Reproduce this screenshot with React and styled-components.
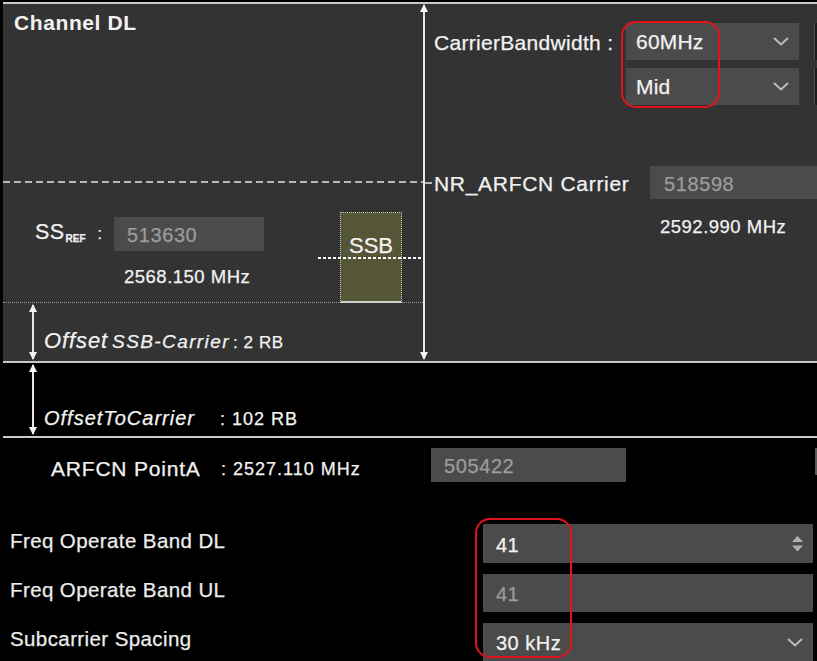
import React from "react";
import styled, { createGlobalStyle } from "styled-components";

const GlobalStyle = createGlobalStyle`
  html, body {
    margin: 0;
    padding: 0;
    background: #000;
  }
  body {
    font-family: "Liberation Sans", Arial, sans-serif;
    color: #f2f2f2;
    -webkit-text-stroke: 0.25px currentColor;
  }
`;

const Page = styled.div`
  position: relative;
  width: 817px;
  height: 661px;
  padding-top: 2px;
  box-sizing: border-box;
  background: #000;
  overflow: hidden;
`;

const TopPanel = styled.div`
  display: flex;
  height: 361px;
  margin-left: 3px;
  box-sizing: border-box;
  background: #333333;
  border-top: 2px solid #c8c8c8;
  border-bottom: 2px solid #c8c8c8;
`;

const LeftCol = styled.div`
  display: flex;
  flex-direction: column;
  width: 420px;
`;

const Head = styled.div`
  height: 177px;
  box-sizing: border-box;
  padding: 7px 0 0 11px;
`;

const Title = styled.div`
  font-size: 21px;
  font-weight: 700;
  letter-spacing: 0.6px;
  line-height: 24px;
  -webkit-text-stroke: 0;
`;

const DashLine = styled.div`
  height: 2px;
  width: ${({ $w }) => ($w ? `${$w}px` : "auto")};
  flex-shrink: 0;
  background: repeating-linear-gradient(90deg, #b8b8b8 0 7px, transparent 7px 11px);
`;

const SsArea = styled.div`
  display: flex;
  height: 120px;
  box-sizing: border-box;
  border-bottom: 1px dotted #9a9a9a;
`;

const SsRef = styled.div`
  padding: 34px 0 0 32px;
`;

const SsRow = styled.div`
  display: flex;
  align-items: flex-end;
`;

const SsLabel = styled.div`
  width: 79px;
  font-size: 21.5px;
  line-height: 24px;
  letter-spacing: 0.4px;

  sub {
    font-size: 10px;
    font-weight: 700;
    vertical-align: -3px;
    letter-spacing: 0;
    margin-left: 1px;
  }

  span {
    font-size: 16px;
    margin-left: 12px;
  }
`;

const Field = styled.div`
  display: flex;
  align-items: center;
  width: ${({ $w }) => $w}px;
  height: ${({ $h }) => $h || 34}px;
  flex-shrink: 0;
  box-sizing: border-box;
  padding: 0 ${({ $pr }) => $pr || 10}px 0 ${({ $pl }) => $pl || 13}px;
  background: #4b4b4b;
  color: ${({ $muted }) => ($muted ? "#9c9c9c" : "#f2f2f2")};
  font-size: ${({ $fs }) => $fs || 20}px;
  letter-spacing: ${({ $ls }) => $ls ?? 0.6}px;
  line-height: 1;
`;

const FieldText = styled.span`
  flex: 1;
  padding-top: ${({ $pt }) => $pt ?? 2}px;
`;

const Freq = styled.div`
  margin: ${({ $mt }) => $mt}px 0 0 ${({ $ml }) => $ml}px;
  font-size: 18.5px;
  line-height: 21px;
  letter-spacing: 0.5px;
`;

const SsbGroup = styled.div`
  position: relative;
  align-self: flex-end;
  margin-left: auto;
  width: 105px;
  padding-left: 22px;
  box-sizing: border-box;

  &::after {
    content: "";
    position: absolute;
    left: 0;
    right: 0;
    top: 45px;
    height: 2px;
    background: repeating-linear-gradient(90deg, #fff 0 3px, transparent 3px 5px);
  }
`;

const SsbBox = styled.div`
  width: 62px;
  height: 91px;
  margin-bottom: -1px;
  box-sizing: border-box;
  padding-top: 20px;
  text-align: center;
  background: #555537;
  border: 1px dotted #c4c4c4;
  border-bottom: 2px solid #cfcfcf;
  font-size: 22px;
  line-height: 25px;
`;

const ArrowBand = styled.div`
  display: flex;
  height: ${({ $h }) => $h}px;
  box-sizing: border-box;
  margin-left: ${({ $ml }) => $ml || 0}px;
  border-bottom: ${({ $line }) => ($line ? "2px solid #c8c8c8" : "none")};
`;

const VArrow = styled.div`
  position: relative;
  width: 2px;
  flex-shrink: 0;
  margin: ${({ $m }) => $m || "2px 0 2px 29px"};
  background: #e6e6e6;

  &::before,
  &::after {
    content: "";
    position: absolute;
    left: -3px;
    border-left: 4px solid transparent;
    border-right: 4px solid transparent;
  }
  &::before {
    top: -1px;
    border-bottom: 8px solid #f4f4f4;
  }
  &::after {
    bottom: -1px;
    border-top: 8px solid #f4f4f4;
  }
`;

const OffsetText = styled.div`
  align-self: flex-end;
  display: flex;
  align-items: baseline;
  margin-left: 10px;
  padding-bottom: ${({ $pb }) => $pb}px;
  line-height: 23px;
  white-space: nowrap;
`;

const Ital = styled.span`
  font-style: italic;
  font-size: ${({ $fs }) => $fs}px;
  letter-spacing: ${({ $ls }) => $ls}px;
  margin-right: ${({ $mr }) => $mr || 0}px;
`;

const Plain = styled.span`
  font-size: ${({ $fs }) => $fs}px;
  letter-spacing: ${({ $ls }) => $ls}px;
  margin-left: ${({ $ml }) => $ml || 0}px;
`;

const RightCol = styled.div`
  flex: 1;
  min-width: 0;
  overflow: hidden;
  padding-left: 9px;
`;

const CarrierRow = styled.div`
  display: flex;
  margin-top: 19px;
`;

const RowLabel = styled.div`
  display: flex;
  align-items: center;
  width: ${({ $w }) => $w}px;
  height: ${({ $h }) => $h}px;
  padding-top: ${({ $pt }) => $pt || 0}px;
  margin-left: ${({ $ml }) => $ml || 0}px;
  box-sizing: border-box;
  flex-shrink: 0;
  font-size: 21px;
  letter-spacing: ${({ $ls }) => $ls ?? 0.3}px;
  white-space: nowrap;
`;

const SelectGrid = styled.div`
  display: grid;
  grid-template-columns: 173px 4px;
  column-gap: 15px;
  row-gap: 8px;
`;

const Sliver = styled.div`
  height: ${({ $h }) => $h || 37}px;
  background: #1c1c1c;
  border-left: 1px solid #4a4a4a;
`;

const NrRow = styled.div`
  display: flex;
  align-items: center;
  margin-top: 61px;
  margin-left: -9px;
`;

const Chevron = () => (
  <svg width="16" height="9" viewBox="0 0 16 9">
    <polyline points="1,1 8,7.5 15,1" fill="none" stroke="#bdbdbd" strokeWidth="2" />
  </svg>
);

const Spinner = () => (
  <svg width="11" height="16" viewBox="0 0 11 16">
    <polygon points="5.5,0 11,6 0,6" fill="#b0b0b0" />
    <polygon points="0,9.5 11,9.5 5.5,15.5" fill="#b0b0b0" />
  </svg>
);

const PointRow = styled.div`
  display: flex;
  align-items: flex-end;
  padding-top: 10px;
`;

const PointLabel = styled.div`
  width: ${({ $w }) => $w}px;
  margin-left: ${({ $ml }) => $ml || 0}px;
  flex-shrink: 0;
  font-size: ${({ $fs }) => $fs}px;
  letter-spacing: ${({ $ls }) => $ls}px;
  line-height: 24px;
  padding-bottom: 1px;
  white-space: nowrap;
`;

const EdgeMark = styled.div`
  align-self: flex-start;
  width: 2px;
  height: 27px;
  margin-left: auto;
  background: #5a5a5a;
`;

const Form = styled.div`
  display: grid;
  grid-template-columns: 473px 330px;
  grid-template-rows: 39px 38px 38px;
  row-gap: 11px;
  margin-top: 42px;
  padding-left: 10px;
`;

const FormLabel = styled.div`
  align-self: center;
  margin-top: -6px;
  font-size: 20.5px;
  letter-spacing: 0.4px;
  line-height: 22px;
  color: #ececec;
  white-space: nowrap;
`;

const Highlight = styled.div`
  position: absolute;
  left: ${({ $x }) => $x}px;
  top: ${({ $y }) => $y}px;
  width: ${({ $w }) => $w}px;
  height: ${({ $h }) => $h}px;
  box-sizing: border-box;
  border: 2px solid #e3131b;
  border-radius: 15px;
  pointer-events: none;
`;

const App = () => {
  const formRows = [
    { label: "Freq Operate Band DL", value: "41", h: 39, extra: <Spinner /> },
    { label: "Freq Operate Band UL", value: "41", h: 38, muted: true },
    { label: "Subcarrier Spacing", value: "30 kHz", h: 38, extra: <Chevron /> },
  ];

  return (
    <Page>
      <GlobalStyle />
      <TopPanel>
        <LeftCol>
          <Head>
            <Title>Channel DL</Title>
          </Head>
          <DashLine />
          <SsArea>
            <SsRef>
              <SsRow>
                <SsLabel>
                  SS<sub>REF</sub>
                  <span>:</span>
                </SsLabel>
                <Field $w={150} $muted>
                  <FieldText>513630</FieldText>
                </Field>
              </SsRow>
              <Freq $mt={15} $ml={89}>2568.150 MHz</Freq>
            </SsRef>
            <SsbGroup>
              <SsbBox>SSB</SsbBox>
            </SsbGroup>
          </SsArea>
          <ArrowBand $h={58}>
            <VArrow />
            <OffsetText $pb={7}>
              <Ital $fs={22} $ls={0.9} $mr={4}>Offset</Ital>
              <Ital $fs={19} $ls={1.4}>SSB-Carrier</Ital>
              <Plain $fs={17} $ls={0.6} $ml={3}>: 2 RB</Plain>
            </OffsetText>
          </ArrowBand>
        </LeftCol>
        <VArrow $m="1px 0 2px 0" />
        <RightCol>
          <CarrierRow>
            <RowLabel $w={192} $h={37} $pt={2}>CarrierBandwidth :</RowLabel>
            <SelectGrid>
              <Field $w={173} $h={37} $pl={10} $fs={21} $ls={0.2}>
                <FieldText $pt={0}>60MHz</FieldText>
                <Chevron />
              </Field>
              <Sliver />
              <Field $w={173} $h={37} $pl={10} $fs={21} $ls={0.2}>
                <FieldText $pt={0}>Mid</FieldText>
                <Chevron />
              </Field>
              <Sliver />
            </SelectGrid>
          </CarrierRow>
          <NrRow>
            <DashLine $w={7} />
            <RowLabel $w={216} $h={33} $pt={3} $ls={0.7} $ml={2}>
              NR_ARFCN Carrier
            </RowLabel>
            <Field $w={200} $h={33} $pl={14} $muted>
              <FieldText>518598</FieldText>
            </Field>
          </NrRow>
          <Freq $mt={17} $ml={226}>2592.990 MHz</Freq>
        </RightCol>
      </TopPanel>

      <ArrowBand $h={75} $ml={3} $line>
        <VArrow />
        <OffsetText $pb={5}>
          <Ital $fs={20} $ls={1}>OffsetToCarrier</Ital>
          <Plain $fs={18} $ls={1} $ml={25}>: 102 RB</Plain>
        </OffsetText>
      </ArrowBand>

      <PointRow>
        <PointLabel $w={170} $ml={51} $fs={21} $ls={0.8}>ARFCN PointA</PointLabel>
        <PointLabel $w={210} $fs={18} $ls={1}>: 2527.110 MHz</PointLabel>
        <Field $w={195} $muted $fs={20} $ls={0.6}>
          <FieldText>505422</FieldText>
        </Field>
        <EdgeMark />
      </PointRow>

      <Form>
        {formRows.map((row) => (
          <React.Fragment key={row.label}>
            <FormLabel>{row.label}</FormLabel>
            <Field $w={330} $h={row.h} $fs={20} $ls={0.5} $muted={row.muted}>
              <FieldText>{row.value}</FieldText>
              {row.extra}
            </Field>
          </React.Fragment>
        ))}
      </Form>

      <Highlight $x={621} $y={21} $w={99} $h={87} />
      <Highlight $x={475} $y={518} $w={97} $h={140} />
    </Page>
  );
};

export default App;
